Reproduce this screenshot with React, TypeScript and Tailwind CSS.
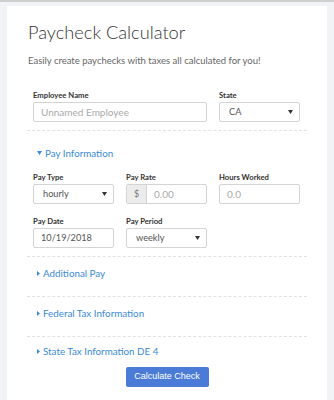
const font = { fontFamily: 'Lato, "Noto Sans", sans-serif' };

function Label({ children }: { children: React.ReactNode }) {
  return <div className="h-[14px] text-[7.7px] font-bold leading-[14px] text-[#333]">{children}</div>;
}

function Caret() {
  return (
    <svg width="5" height="4" viewBox="0 0 5 4" className="shrink-0">
      <path d="M0 0 L5 0 L2.5 4 Z" fill="#333" />
    </svg>
  );
}

function SelectBox({ value }: { value: string }) {
  return (
    <div className="flex h-[20px] items-center justify-between rounded-[2px] border border-[#d4d4d4] bg-white pl-[9px] pr-[6px] text-[9.2px] text-[#555]">
      <span>{value}</span>
      <Caret />
    </div>
  );
}

function TextBox({ value, muted }: { value: string; muted?: boolean }) {
  return (
    <div
      className={`flex h-[20px] items-center rounded-[2px] border border-[#d4d4d4] bg-white px-[7px] ${
        muted ? 'text-[10px] text-[#aaa]' : 'text-[9.2px] text-[#555]'
      }`}
    >
      {value}
    </div>
  );
}

function Section({ title, open }: { title: string; open?: boolean }) {
  return (
    <div className="flex items-center gap-[3px] pl-[10px] text-[9.8px] text-[#3a8ad8]">
      {open ? (
        <svg width="5" height="4" viewBox="0 0 5 4">
          <path d="M0 0 L5 0 L2.5 4 Z" fill="#3a8ad8" />
        </svg>
      ) : (
        <svg width="3" height="5" viewBox="0 0 3 5">
          <path d="M0 0 L3 2.5 L0 5 Z" fill="#3a8ad8" />
        </svg>
      )}
      <span>{title}</span>
    </div>
  );
}

export default function App() {
  return (
    <div className="min-h-[400px] bg-[#f2f3f7]" style={font}>
      <div className="h-[2px] bg-[#cfcfcf]" />
      <div className="mx-[7px] mt-[4px] min-h-[394px] bg-white">
        <div className="px-[21px] pt-[14px]">
          <h1 className="text-[18.2px] font-light leading-[24px] text-[#333]">Paycheck Calculator</h1>
          <p className="mt-[10px] text-[9.5px] leading-[14px] text-[#666]">
            Easily create paychecks with taxes all calculated for you!
          </p>
        </div>

        <div className="mx-[20px] mt-[20px]">
          <div className="grid grid-cols-[81px_81px_81px] gap-x-[12px] px-[6px]">
            <div className="col-span-2">
              <Label>Employee Name</Label>
              <TextBox value="Unnamed Employee" muted />
            </div>
            <div>
              <Label>State</Label>
              <SelectBox value="CA" />
            </div>
          </div>

          <div className="mt-[8px] border-t border-dashed border-[#e2e2e2]" />

          <div className="flex h-[39px] items-center pt-[5px]">
            <Section title="Pay Information" open />
          </div>

          <div className="grid grid-cols-[81px_81px_81px] gap-x-[12px] gap-y-[10px] px-[6px]">
            <div>
              <Label>Pay Type</Label>
              <SelectBox value="hourly" />
            </div>
            <div>
              <Label>Pay Rate</Label>
              <div className="flex h-[20px] overflow-hidden rounded-[2px] border border-[#d4d4d4] text-[10px]">
                <div className="flex w-[20px] items-center justify-center border-r border-[#d4d4d4] bg-[#ececec] text-[9px] text-[#777]">
                  $
                </div>
                <div className="flex items-center px-[7px] text-[#aaa]">0.00</div>
              </div>
            </div>
            <div>
              <Label>Hours Worked</Label>
              <TextBox value="0.0" muted />
            </div>
            <div>
              <Label>Pay Date</Label>
              <TextBox value="10/19/2018" />
            </div>
            <div>
              <Label>Pay Period</Label>
              <SelectBox value="weekly" />
            </div>
          </div>

          <div className="mt-[8px] border-t border-dashed border-[#e2e2e2]" />
          <div className="flex h-[39px] items-center pb-[7px]">
            <Section title="Additional Pay" />
          </div>
          <div className="border-t border-dashed border-[#e2e2e2]" />
          <div className="flex h-[39px] items-center pb-[6px]">
            <Section title="Federal Tax Information" />
          </div>
          <div className="border-t border-dashed border-[#e2e2e2]" />
          <div className="flex h-[30px] items-center pb-[2px]">
            <Section title="State Tax Information DE 4" />
          </div>

          <div className="flex justify-center">
            <button
              className="h-[20px] w-[83px] rounded-[2px] bg-[#4a7bd6] text-[9px] text-white"
              style={{ fontFamily: '"Liberation Sans", Arial, sans-serif' }}
            >
              Calculate Check
            </button>
          </div>
        </div>
      </div>
    </div>
  );
}
